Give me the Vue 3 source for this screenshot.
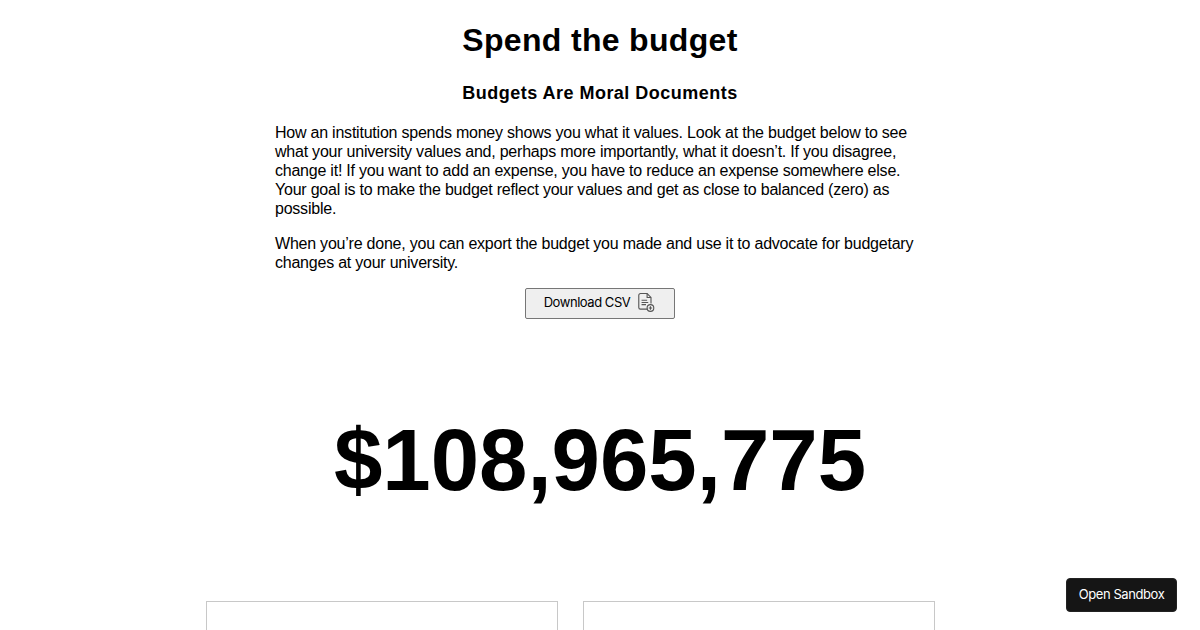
<script setup>
const cards = [1, 2]
</script>

<template>
  <div class="page">
    <header class="intro">
      <h1>Spend the budget</h1>
      <h2>Budgets Are Moral Documents</h2>
      <p>How an institution spends money shows you what it values. Look at the budget below to see what your university values and, perhaps more importantly, what it doesn’t. If you disagree, change it! If you want to add an expense, you have to reduce an expense somewhere else. Your goal is to make the budget reflect your values and get as close to balanced (zero) as possible.</p>
      <p>When you’re done, you can export the budget you made and use it to advocate for budgetary changes at your university.</p>
      <button class="download" type="button">
        <span class="label">Download CSV</span>
        <svg class="file-icon" width="18" height="20" viewBox="0 0 16 18" fill="none" stroke="#555" stroke-width="1">
          <path d="M9.5 14.5H3A1.5 1.5 0 0 1 1.5 13V2A1.5 1.5 0 0 1 3 .5h6l3.5 3.5v5.5" />
          <path d="M9 .5V4h3.5" />
          <path d="M4 6.5h5M4 8.5h6M4 10.5h4" />
          <circle cx="12" cy="13.5" r="3" />
          <path d="M12 12v3M10.5 13.5h3" />
        </svg>
      </button>
    </header>
    <div class="total">$108,965,775</div>
    <section class="cards">
      <div v-for="c in cards" :key="c" class="card"></div>
    </section>
    <button class="sandbox" type="button">Open Sandbox</button>
  </div>
</template>

<style>
html, body { margin: 0; background: #fff; overflow: hidden; }
</style>

<style scoped>
.page {
  height: 630px;
  overflow: hidden;
  font-family: "Liberation Sans", Arial, sans-serif;
  color: #000;
}
.intro {
  width: 650px;
  margin: 0 auto;
  display: flex;
  flex-direction: column;
  padding-top: 22px;
}
h1 {
  margin: 0;
  font-size: 32px;
  line-height: 37px;
  font-weight: 700;
  text-align: center;
  letter-spacing: 0.32px;
}
h2 {
  margin: 24px 0 0;
  font-size: 18px;
  line-height: 21px;
  font-weight: 700;
  text-align: center;
  letter-spacing: 0.48px;
}
p {
  margin: 19px 0 0;
  font-size: 16px;
  line-height: 19px;
  letter-spacing: -0.225px;
}
p + p { margin-top: 16px; }
.download {
  align-self: center;
  margin-top: 16px;
  width: 150px;
  height: 31px;
  display: flex;
  align-items: center;
  justify-content: center;
  gap: 6px;
  padding: 0 0 2px;
  background: #efefef;
  border: 1px solid #767676;
  border-radius: 2px;
  font-family: Inter, sans-serif;
  font-size: 13px;
  letter-spacing: -0.45px;
  color: #000;
}
.label {
  margin: 0 1px 2px -1px;
}
.total {
  margin-top: 90px;
  text-align: center;
  font-size: 87px;
  line-height: 101px;
  font-weight: 700;
}
.cards {
  display: flex;
  gap: 25px;
  margin-top: 91px;
  margin-left: 206px;
}
.card {
  width: 350px;
  height: 200px;
  border: 1px solid #c8c8c8;
}
.sandbox {
  position: absolute;
  right: 23px;
  top: 578px;
  width: 111px;
  height: 34px;
  padding: 0 0 2px;
  background: #151515;
  color: #fff;
  border: 1px solid #222;
  border-radius: 4px;
  font-family: Inter, sans-serif;
  font-size: 13px;
  letter-spacing: -0.42px;
}
</style>
